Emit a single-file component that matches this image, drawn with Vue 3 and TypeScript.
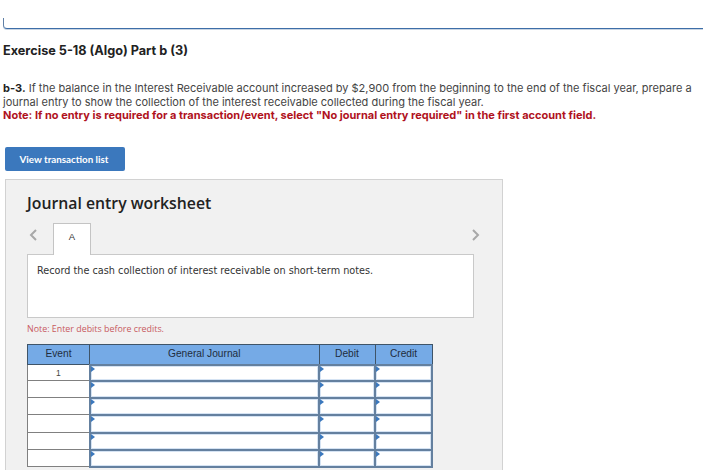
<template>
  <div class="page">
    <div class="top-rule"></div>
    <h1 class="title">Exercise 5-18 (Algo) Part b (3)</h1>
    <div class="question">
      <p><b>b-3.</b> If the balance in the Interest Receivable account increased by $2,900 from the beginning to the end of the fiscal year, prepare a<br />journal entry to show the collection of the interest receivable collected during the fiscal year.</p>
      <p class="warn">Note: If no entry is required for a transaction/event, select "No journal entry required" in the first account field.</p>
    </div>
    <button class="btn-view">View transaction list</button>

    <section class="panel">
      <h2>Journal entry worksheet</h2>
      <div class="tabs">
        <svg class="chev" width="10" height="14" viewBox="0 0 10 14"><path d="M8 2 L3 7 L8 12" /></svg>
        <div class="tab">A</div>
        <svg class="chev chev-right" width="10" height="14" viewBox="0 0 10 14"><path d="M2 2 L7 7 L2 12" /></svg>
      </div>
      <div class="card">Record the cash collection of interest receivable on short-term notes.</div>
      <p class="note">Note: Enter debits before credits.</p>

      <table class="journal">
        <thead>
          <tr>
            <th class="c-event">Event</th>
            <th class="c-acct">General Journal</th>
            <th class="c-debit">Debit</th>
            <th class="c-credit">Credit</th>
          </tr>
        </thead>
        <tbody>
          <tr v-for="(row, i) in rows" :key="i" :style="{ height: row.h + 'px' }">
            <td class="event">{{ row.event }}</td>
            <td v-for="c in 3" :key="c" class="entry"><span class="flag"></span></td>
          </tr>
        </tbody>
      </table>
    </section>
  </div>
</template>

<script setup lang="ts">
const rows = [
  { event: '1', h: 16 },
  { event: '', h: 17 },
  { event: '', h: 17 },
  { event: '', h: 18 },
  { event: '', h: 17 },
  { event: '', h: 17 },
]
</script>

<style>
html, body { margin: 0; background: #fff; overflow: hidden; }
</style>

<style scoped>
.page { width: 703px; height: 470px; overflow: hidden; font-family: Inter, "Liberation Sans", sans-serif; color: #333; position: relative; }
.top-rule { margin-left: 3px; height: 10px; margin-top: 18px; border-left: 1px solid #5f7fa6; border-bottom: 1px solid #3d6ea8; border-bottom-left-radius: 4px; box-shadow: 0 1px 0 #c9d5e3; }
.title { margin: 14px 0 0 3px; font-size: 12.7px; line-height: 16px; font-weight: 700; color: #222; }
.question { margin: 23px 0 0 3px; font-size: 11px; line-height: 13.5px; color: #444; }
.question p { margin: 0; white-space: nowrap; }
.question b { color: #222; }
.warn { color: #b0121d; font-weight: 700; }
.btn-view { display: block; margin: 24px 0 0 5px; width: 120px; height: 24px; padding: 0 2px 0 0; background: #3b78bd; border: none; border-radius: 2px; color: #fff; font-family: Lato, sans-serif; font-size: 9.8px; font-weight: 700; }
.panel { margin: 8px 0 0 5px; width: 498px; height: 300px; box-sizing: border-box; padding: 0 0 0 21px; background: #f1f1f1; border: 1px solid #d2d2d2; }
h2 { margin: 14px 0 0; font-family: "Open Sans", "DejaVu Sans", sans-serif; font-size: 15.8px; line-height: 19px; font-weight: 600; color: #222; }
.tabs { margin-top: 10px; display: flex; align-items: flex-start; height: 32px; width: 448px; position: relative; }
.chev { margin: 5px 0 0 1px; fill: none; stroke: #a8a8a8; stroke-width: 2; }
.chev-right { position: absolute; right: -6px; top: 0; }
.tab { margin-left: 15px; width: 38px; height: 32px; box-sizing: border-box; background: #fff; border: 1px solid #c4c4c4; border-bottom: none; text-align: center; font-size: 9.5px; line-height: 25px; position: relative; z-index: 1; font-family: "Liberation Sans", sans-serif; }
.card { width: 447px; height: 64px; box-sizing: border-box; margin-top: -1px; padding: 10px 9px; background: #fff; border: 1px solid #c9c9c9; font-family: "DejaVu Sans", sans-serif; font-size: 9.7px; line-height: 12px; color: #333; }
.note { margin: 5px 0 0; font-family: "Open Sans", "DejaVu Sans", sans-serif; font-size: 8.9px; line-height: 12px; color: #c85a5f; }
.journal { margin-top: 9px; width: 406px; table-layout: fixed; border-collapse: collapse; font-family: "Liberation Sans", sans-serif; }
.journal th { height: 18px; padding: 0 0 1px; background: #75aae6; border: 1px solid #3f5468; font-size: 10.2px; font-weight: 400; color: #1f2d3d; }
.c-event { width: 61px; }
.c-debit { width: 55px; }
.c-credit { width: 56px; }
.journal td { padding: 0; background: #fff; }
.event { border: 1px solid #808080; text-align: center; font-size: 8.5px; color: #444; vertical-align: middle; }
.entry { border: 2px solid #64809f; position: relative; box-shadow: inset 0 0 0 1px #d5e3f3; }
.flag { position: absolute; left: 0; top: 0; width: 0; height: 0; border-top: 3px solid transparent; border-bottom: 3px solid transparent; border-left: 4px solid #3b78bd; }
</style>
